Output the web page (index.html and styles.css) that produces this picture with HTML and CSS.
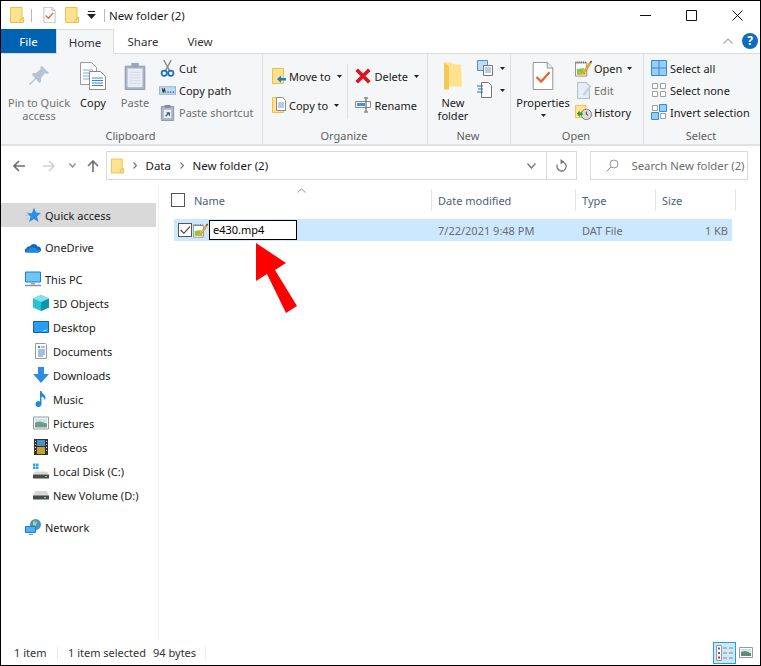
FILE: index.html
```html
<!DOCTYPE html>
<html lang="en">
<head>
<meta charset="utf-8">
<title>New folder (2)</title>
<link rel="stylesheet" href="styles.css">
</head>
<body>
<svg class="defs" width="0" height="0" aria-hidden="true">
  <symbol id="folder" viewBox="0 0 14 16">
    <path d="M.5.5h11.5v15H.5z" fill="#ffe28e" stroke="#eac04f"/>
    <path d="M12 10.5h1.5v5H10v-3h2z" fill="#ffe28e" stroke="#eac04f"/>
  </symbol>
  <symbol id="props" viewBox="0 0 22 30">
    <path d="M.5.5h15l6 6v23H.5z" fill="#fff" stroke="#8a8a8a"/>
    <path d="M15.5.5v6h6" fill="#eee" stroke="#8a8a8a"/>
    <path d="M4 16l5 5 9-10" fill="none" stroke="#e8642c" stroke-width="2.4"/>
  </symbol>
  <symbol id="notepad" viewBox="0 0 18 17">
    <path d="M.5 2.5h12v14H.5z" fill="#fff" stroke="#8a8a8a"/>
    <path d="M1 1v2M3 1v2M5 1v2M7 1v2M9 1v2M11 1v2" stroke="#666"/>
    <path d="M2 9l8-1-3 7H2z" fill="#8cc63f"/>
    <path d="M7 14l3.500-1L12 15H3l2-3z" fill="#e6b422"/>
    <path d="M8 13L15.500 2l1.500 1L10 14z" fill="#f0b429" stroke="#a96a00" stroke-width=".5"/>
    <path d="M15.500 2L17 0l1 1-1 2z" fill="#8b1a1a"/>
  </symbol>
  <symbol id="caret" viewBox="0 0 7 4"><path d="M0 0h7L3.500 4z" fill="#222"/></symbol>
  <symbol id="drive" viewBox="0 0 16 10">
    <path d="M2 1h12l2 5H0z" fill="#d8d8d8"/>
    <path d="M0 5.500h16v4H0z" fill="#4b4b4b"/>
    <path d="M11 7h2v1.200h-2z" fill="#6fdc6f"/>
  </symbol>
</svg>

<div class="window">
  <header class="titlebar">
    <svg class="ic-folder"><use href="#folder"/></svg>
    <span class="qdiv"></span>
    <svg class="ic-qprops"><use href="#props"/></svg>
    <svg class="ic-folder ic-q2"><use href="#folder"/></svg>
    <svg class="ic-qdrop" viewBox="0 0 9 8"><path d="M1 0h7v1H1z" fill="#222"/><path d="M0 3h9L4.500 8z" fill="#222"/></svg>
    <span class="qdiv qdiv2"></span>
    <span class="title">New folder (2)</span>
    <div class="winctrls">
      <svg class="winbtn" viewBox="0 0 11 11"><path d="M0 5.500h11" stroke="#111"/></svg>
      <svg class="winbtn" viewBox="0 0 11 11"><path d="M.5.500h10v10H.5z" fill="none" stroke="#111"/></svg>
      <svg class="winbtn" viewBox="0 0 11 11"><path d="M.5.500l10 10M10.500.500l-10 10" stroke="#111" fill="none"/></svg>
    </div>
  </header>

  <nav class="tabs">
    <span class="tab tab-file">File</span>
    <span class="tab tab-home">Home</span>
    <span class="tab tab-share">Share</span>
    <span class="tab tab-view">View</span>
    <svg class="ribbon-up" viewBox="0 0 10 6"><path d="M.5 5.500L5 1l4.500 4.500" fill="none" stroke="#a8a8a8" stroke-width="1.200"/></svg>
    <span class="help">?</span>
  </nav>

  <section class="ribbon">
    <div class="group g-clip">
      <div class="group-body">
        <div class="big big-pin dim">
          <svg class="big-ic" viewBox="0 0 24 28"><path d="M15 4l7 7-2 1-2-1-4 5 0 4-2 1-3-4-6 6-1-1 6-6-3-3 1-2h3l5-4-1-2z" fill="#b6c3d6"/></svg>
          <span>Pin to Quick<br>access</span>
        </div>
        <div class="big big-copy">
          <svg class="big-ic" viewBox="0 0 26 28">
            <path d="M.5.500h11l5 5v17H.5z" fill="#fff" stroke="#9a9a9a"/>
            <path d="M3 8h10M3 11h10M3 14h10M3 17h10" stroke="#7ba7e0"/>
            <path d="M9.500 9.500h11l5 5v13h-16z" fill="#fff" stroke="#8a8a8a"/>
            <path d="M12 16h11M12 18.500h11M12 21h11M12 23.500h11" stroke="#3f7fdc"/>
          </svg>
          <span>Copy</span>
        </div>
        <div class="big big-paste dim">
          <svg class="big-ic" viewBox="0 0 22 30">
            <path d="M.5 4.500h21v25H.5z" fill="#a8b4c6" stroke="#8b97aa"/>
            <path d="M3 7h16v20H3z" fill="#e9eef6"/>
            <path d="M7 1h8v5H7z" fill="#9aa6b8"/>
            <path d="M5 11h12M5 14h12M5 17h12M5 20h12M5 23h12" stroke="#cfd8e6"/>
          </svg>
          <span>Paste</span>
        </div>
        <div class="col col-clip">
          <div class="small">
            <svg class="sm-ic" viewBox="0 0 16 18"><path d="M4 0l6 11M12 0L6 11" stroke="#8a8a8a" stroke-width="1.500"/><circle cx="4.500" cy="14" r="2.800" fill="none" stroke="#1a6fc0" stroke-width="1.800"/><circle cx="11.500" cy="14" r="2.800" fill="none" stroke="#1a6fc0" stroke-width="1.800"/></svg>
            <span>Cut</span>
          </div>
          <div class="small">
            <svg class="sm-ic" viewBox="0 0 16 16"><path d="M.5 4.500h15v7H.5z" fill="#bcdcf5" stroke="#8fb7d8"/><path d="M3 6l1 4 1-4 1 4M8 9.500h1M10.500 9.500h1M13 9.500h1" stroke="#333" fill="none"/></svg>
            <span>Copy path</span>
          </div>
          <div class="small dim">
            <svg class="sm-ic" viewBox="0 0 16 18"><path d="M1.500 2.500h13v15h-13z" fill="#a8b4c6" stroke="#8b97aa"/><path d="M5 1h6v3H5z" fill="#7e8a9d"/><path d="M4 6h8v9H4z" fill="#e9eef6"/><path d="M6 13l3-3M7 9.500h3v3" stroke="#44597a" fill="none" stroke-width="1.300"/></svg>
            <span>Paste shortcut</span>
          </div>
        </div>
      </div>
      <div class="group-label">Clipboard</div>
    </div>

    <div class="group g-org">
      <div class="group-body">
        <div class="col col-org">
          <div class="small">
            <svg class="sm-ic org-ic" viewBox="0 0 14 16"><path d="M.5.500h11v15H.5z" fill="#ffe28e" stroke="#eac04f"/><path d="M5 11l4-3.500V10h5v2.500H9V15z" fill="#1f7fd0"/></svg>
            <span class="txt-caret">Move to</span>
            <svg class="caret"><use href="#caret"/></svg>
          </div>
          <div class="small">
            <svg class="sm-ic org-ic" viewBox="0 0 14 16"><path d="M.5.500h11v15H.5z" fill="#ffe28e" stroke="#eac04f"/><path d="M4.500.500h6l3 3v10h-9z" fill="#fff" stroke="#8a8a8a"/><path d="M6 6h6M6 8h6M6 10h6" stroke="#6a9ad8"/></svg>
            <span class="txt-caret">Copy to</span>
            <svg class="caret"><use href="#caret"/></svg>
          </div>
        </div>
        <span class="vdiv"></span>
        <div class="col col-org col-del">
          <div class="small">
            <svg class="sm-ic del-ic" viewBox="0 0 14 14"><path d="M1.500 1.500l11 11M12.500 1.500l-11 11" stroke="#e0101c" stroke-width="3.200"/></svg>
            <span class="txt-caret">Delete</span>
            <svg class="caret"><use href="#caret"/></svg>
          </div>
          <div class="small">
            <svg class="sm-ic del-ic" viewBox="0 0 16 16"><path d="M.5 4.500h15v6H.5z" fill="#fff" stroke="#8a8a8a"/><path d="M2 6h8v3H2z" fill="#3a96e0"/><path d="M11 1.500v13M9 1h4M9 15h4" stroke="#555" fill="none"/></svg>
            <span>Rename</span>
          </div>
        </div>
      </div>
      <div class="group-label">Organize</div>
    </div>

    <div class="group g-new">
      <div class="group-body">
        <div class="big big-new">
          <svg class="big-ic" viewBox="0 0 18 27"><path d="M0 0h7l3 2 7 0 1 22H5L0 27z" fill="#ffe28e"/><path d="M0 0l5 4v23L0 27z" fill="#f2c955"/></svg>
          <span>New<br>folder</span>
        </div>
        <div class="col col-newitems">
          <div class="small">
            <svg class="new-ic" viewBox="0 0 20 16"><path d="M.5.500h10v10H.5z" fill="#bcdcf5" stroke="#5a8fb8"/><path d="M6.500 5.500h9v10h-9z" fill="#fff" stroke="#777"/><path d="M8 8h6M8 10h6M8 12h6" stroke="#6a9ad8"/></svg>
            <svg class="caret"><use href="#caret"/></svg>
          </div>
          <div class="small">
            <svg class="new-ic" viewBox="0 0 20 16"><path d="M4.500.500h7l3 3v12h-10z" fill="#fff" stroke="#777"/><path d="M0 4h6M1 7h5M0 10h6" stroke="#1a6fc0" stroke-width="1.200"/></svg>
            <svg class="caret"><use href="#caret"/></svg>
          </div>
        </div>
      </div>
      <div class="group-label">New</div>
    </div>

    <div class="group g-open">
      <div class="group-body">
        <div class="big big-props">
          <svg class="big-ic"><use href="#props"/></svg>
          <span>Properties</span>
          <svg class="caret caret-big"><use href="#caret"/></svg>
        </div>
        <div class="col col-open">
          <div class="small">
            <svg class="sm-ic"><use href="#notepad"/></svg>
            <span class="txt-caret">Open</span>
            <svg class="caret"><use href="#caret"/></svg>
          </div>
          <div class="small dim">
            <svg class="sm-ic" viewBox="0 0 16 16"><path d="M2.500.500h8l3 3v12h-11z" fill="#e6edf7" stroke="#b0bdd0"/><path d="M7 12L14 3l1.500 1L9 13z" fill="#c4d0e2"/></svg>
            <span>Edit</span>
          </div>
          <div class="small">
            <svg class="sm-ic" viewBox="0 0 18 16"><path d="M.5.500h11v13H.5z" fill="#ffe28e" stroke="#eac04f"/><circle cx="12" cy="10" r="5.500" fill="#ddd" stroke="#777"/><path d="M12 7v3l2 1" stroke="#333" fill="none"/><path d="M2 9l3-3v2h3v3H5v2z" fill="#2f9e2f"/></svg>
            <span>History</span>
          </div>
        </div>
      </div>
      <div class="group-label">Open</div>
    </div>

    <div class="group g-select">
      <div class="group-body">
        <div class="col col-select">
          <div class="small">
            <svg class="sm-ic" viewBox="0 0 16 16"><path d="M.5.500h15v15H.5z" fill="#9ccbf5" stroke="#2b8fe0"/><path d="M8 0v16M0 8h16" stroke="#2b8fe0"/></svg>
            <span>Select all</span>
          </div>
          <div class="small">
            <svg class="sm-ic" viewBox="0 0 16 16"><path d="M1.500 1.500h5v5h-5zM9.500 1.500h5v5h-5zM1.500 9.500h5v5h-5zM9.500 9.500h5v5h-5z" fill="#fff" stroke="#a0a0a0"/></svg>
            <span>Select none</span>
          </div>
          <div class="small">
            <svg class="sm-ic" viewBox="0 0 16 16"><path d="M1.500 1.500h5v5h-5zM9.500 9.500h5v5h-5z" fill="#fff" stroke="#a0a0a0"/><path d="M8.500.500h7v7h-7zM.5 8.500h7v7h-7z" fill="#9ccbf5" stroke="#2b8fe0"/></svg>
            <span>Invert selection</span>
          </div>
        </div>
      </div>
      <div class="group-label">Select</div>
    </div>
  </section>

  <div class="navrow">
    <svg class="nav-ic" viewBox="0 0 12 12"><path d="M12 6H1.500M6 1L1 6l5 5" fill="none" stroke="#6d6d6d" stroke-width="1.600"/></svg>
    <svg class="nav-ic nav-fwd" viewBox="0 0 12 12"><path d="M0 6h10.500M6 1l5 5-5 5" fill="none" stroke="#d0d0d0" stroke-width="1.600"/></svg>
    <svg class="nav-chev" viewBox="0 0 7 5"><path d="M.5.500L3.500 4l3-3.500" fill="none" stroke="#8a8a8a" stroke-width="1.300"/></svg>
    <svg class="nav-ic nav-up" viewBox="0 0 12 12"><path d="M6 12V1.500M1 6l5-5 5 5" fill="none" stroke="#6d6d6d" stroke-width="1.600"/></svg>
    <div class="addr">
      <svg class="ic-folder addr-folder"><use href="#folder"/></svg>
      <svg class="crumb" viewBox="0 0 4 7"><path d="M.5.500l3 3-3 3" fill="none" stroke="#777" stroke-width="1.200"/></svg>
      <span class="crumb-t">Data</span>
      <svg class="crumb" viewBox="0 0 4 7"><path d="M.5.500l3 3-3 3" fill="none" stroke="#777" stroke-width="1.200"/></svg>
      <span class="crumb-t">New folder (2)</span>
      <svg class="addr-chev" viewBox="0 0 9 6"><path d="M.5.500L4.500 5l4-4.500" fill="none" stroke="#777" stroke-width="1.400"/></svg>
      <span class="addr-refresh">
        <svg class="refresh" viewBox="0 0 12 14"><path d="M6 3a5 5 0 1 1-4.500 3" fill="none" stroke="#777" stroke-width="1.400"/><path d="M5 0v5.500L9 3z" fill="#777"/></svg>
      </span>
    </div>
    <div class="search">
      <svg class="search-ic" viewBox="0 0 13 13"><circle cx="8" cy="5" r="4" fill="none" stroke="#999"/><path d="M5 8l-4.500 4.500" stroke="#999"/></svg>
      <span>Search New folder (2)</span>
    </div>
  </div>

  <div class="main">
    <aside class="side">
      <div class="nav-item top active"><svg class="tree-ic" viewBox="0 0 16 15"><path d="M9 0l2 5 5 .5-4 3.500 1.500 5.500L9 11.500 4 14.500 5.500 9 2 6l5-.5z" fill="#2a8fe6"/><path d="M0 5h4M0 8h3M0 11h3" stroke="#a6cff0"/></svg><span>Quick access</span></div>
      <div class="nav-item top gap"><svg class="tree-ic" viewBox="0 0 16 11"><path d="M2 11a2 2 0 0 1-.5-4C2 5 4 4.500 5 5c1-3 6-3.500 7.500 0a3 3 0 0 1 1 6z" fill="#0f66c0"/><path d="M2 11a2 2 0 0 1 1-3c2-3 7-3 9 0l3 .5a2 2 0 0 1-1.500 2.500z" fill="#1e8ae0"/></svg><span>OneDrive</span></div>
      <div class="nav-item top gap"><svg class="tree-ic" viewBox="0 0 16 15"><path d="M.5.500h15v10H.5z" fill="#6ec6f5" stroke="#1c7fc9"/><path d="M6 11h4v2H6z" fill="#a0a8b0"/><path d="M0 14h16" stroke="#8a949e" stroke-width="1.500"/></svg><span>This PC</span></div>
      <div class="nav-item"><svg class="tree-ic" viewBox="0 0 16 16"><path d="M8 0l8 3.500v9L8 16l-8-3.500v-9z" fill="#27c2d6"/><path d="M8 7l8-3.500v9L8 16z" fill="#0f95a8"/><path d="M8 0l8 3.500L8 7 0 3.500z" fill="#7fe3ee"/></svg><span>3D Objects</span></div>
      <div class="nav-item"><svg class="tree-ic" viewBox="0 0 16 12"><path d="M.5.500h15v11H.5z" fill="#2a9df4" stroke="#0f63a8"/><path d="M10 10l4-1" stroke="#bde4ff"/></svg><span>Desktop</span></div>
      <div class="nav-item"><svg class="tree-ic" viewBox="0 0 16 16"><path d="M2.500.500h10l1 1v14h-11z" fill="#fff" stroke="#999"/><path d="M5 3h2v2H5z" fill="#2a8fe6"/><path d="M8 4h4M5 7h7M5 9h7M5 11h7M5 13h5" stroke="#4a80b8"/></svg><span>Documents</span></div>
      <div class="nav-item"><svg class="tree-ic" viewBox="0 0 16 16"><path d="M5 0h6v7h5l-8 9-8-9h5z" fill="#2f8be0"/></svg><span>Downloads</span></div>
      <div class="nav-item"><svg class="tree-ic" viewBox="0 0 16 16"><path d="M7 0h1.500c0 3 4 3.500 4 7 0 1-.5 2-1 2.500.5-2-1-3.500-3-4V13a3 3 0 1 1-1.500-2.500z" fill="#1e8ae0"/></svg><span>Music</span></div>
      <div class="nav-item"><svg class="tree-ic" viewBox="0 0 16 13"><path d="M.5.500h15v12H.5z" fill="#fff" stroke="#999"/><path d="M2 2h12v4H2z" fill="#c9e3f5"/><path d="M2 6l5-1 7 2v4H2z" fill="#6e9a8a"/></svg><span>Pictures</span></div>
      <div class="nav-item"><svg class="tree-ic" viewBox="0 0 14 16"><path d="M0 0h14v16H0z" fill="#333"/><path d="M3 1h8v6H3z" fill="#4a90d0"/><path d="M3 8h8v7H3z" fill="#c8a030"/><path d="M1 2h1v1H1zM1 5h1v1H1zM1 8h1v1H1zM1 11h1v1H1zM12 2h1v1h-1zM12 5h1v1h-1zM12 8h1v1h-1zM12 11h1v1h-1z" fill="#ddd"/></svg><span>Videos</span></div>
      <div class="nav-item"><svg class="tree-ic" viewBox="0 0 16 15"><path d="M0 0h2.500v2.500H0zM3 0h2.500v2.500H3zM0 3h2.500v2.500H0zM3 3h2.500v2.500H3z" fill="#26a8e8"/><path d="M2 8h12l2 3H0z" fill="#d8d8d8"/><path d="M0 11h16v4H0z" fill="#4b4b4b"/><path d="M12 12.500h2v1h-2z" fill="#6fdc6f"/></svg><span>Local Disk (C:)</span></div>
      <div class="nav-item"><svg class="tree-ic drive-ic"><use href="#drive"/></svg><span>New Volume (D:)</span></div>
      <div class="nav-item top gap"><svg class="tree-ic" viewBox="0 0 16 16"><circle cx="10.500" cy="5.500" r="5.500" fill="#4b94c8"/><path d="M8 2l4 1-1 4-3-1z" fill="#a6d47c"/><path d="M.5 7.500h10v6H.5z" fill="#4ab4f0" stroke="#1c7fc9"/><path d="M4 15.500h4" stroke="#8a949e"/></svg><span>Network</span></div>
    </aside>

    <section class="files">
      <svg class="sort" viewBox="0 0 9 5"><path d="M.5 4.500L4.500 1l4 3.500" fill="none" stroke="#9a9a9a"/></svg>
      <div class="head">
        <div class="h-cell h-name"><span class="cbox"></span><span>Name</span></div>
        <div class="h-cell">Date modified</div>
        <div class="h-cell">Type</div>
        <div class="h-cell">Size</div>
      </div>
      <div class="row">
        <div class="r-name">
          <span class="cbox checked"><svg viewBox="0 0 11 11"><path d="M1.500 5.500l3 3 5.500-6" fill="none" stroke="#333"/></svg></span>
          <svg class="file-ic"><use href="#notepad"/></svg>
          <span class="rename">e430.mp4</span>
        </div>
        <div class="r-cell">7/22/2021 9:48 PM</div>
        <div class="r-cell">DAT File</div>
        <div class="r-cell r-size">1 KB</div>
      </div>
      <svg class="pointer" viewBox="0 0 46 70"><path d="M1 0l30 20-11 7 22 36-11 7-19-39-11 7z" fill="#fe0000"/></svg>
    </section>
  </div>

  <footer class="status">
    <span class="s-count">1 item</span>
    <span class="s-sel">1 item selected</span>
    <span class="s-bytes">94 bytes</span>
    <span class="s-views">
      <span class="view-btn on">
        <svg viewBox="0 0 18 16"><path d="M.5.500h5v15h-5z" fill="#fff" stroke="#999"/><path d="M2 2.500h2v2H2zM2 7h2v2H2z" fill="#666"/><path d="M2 11.500h2v2H2z" fill="#c0392b"/><path d="M7 3h4M13 3h4M7 8h4M13 8h4M7 13h4M13 13h4" stroke="#888" stroke-width="1.200"/></svg>
      </span>
      <span class="view-btn">
        <svg viewBox="0 0 14 11"><path d="M.5.500h13v10H.5z" fill="#fff" stroke="#999"/><path d="M2 2h10v3H2z" fill="#c9e3f5"/><path d="M2 5l4-1 6 2v3H2z" fill="#5e8a78"/></svg>
      </span>
    </span>
  </footer>
</div>
</body>
</html>
```

FILE: styles.css
```css
* { box-sizing: border-box; }
html, body { margin: 0; padding: 0; }
body {
  width: 761px;
  height: 666px;
  overflow: hidden;
  background: #fff;
  font-family: "Noto Sans", "Open Sans", sans-serif;
  font-size: 11px;
  color: #1a1a1a;
}
.defs { display: block; height: 0; width: 0; }
svg { display: block; flex: none; }

.window {
  width: 761px;
  height: 666px;
  display: flex;
  flex-direction: column;
  border: 1px solid #000;
  background: #fff;
}

/* title bar */
.titlebar { height: 28px; display: flex; align-items: center; padding-left: 9px; flex: none; }
.ic-folder { width: 14px; height: 16px; }
.qdiv { width: 1px; height: 13px; background: #b8b8b8; margin-left: 7px; }
.ic-qprops { width: 13px; height: 16px; margin-left: 11px; }
.ic-q2 { margin-left: 9px; }
.ic-qdrop { width: 9px; height: 8px; margin-left: 8px; }
.qdiv2 { margin-left: 8px; }
.title { font-size: 11.500px; margin-left: 4px; }
.winctrls { margin-left: auto; display: flex; gap: 35px; padding-right: 17px; }
.winbtn { width: 11px; height: 11px; }

/* tabs */
.tabs { height: 24px; flex: none; display: flex; align-items: stretch; position: relative; z-index: 1; }
.tab { display: flex; align-items: center; justify-content: center; font-size: 11.500px; color: #333; }
.tab-file { width: 55px; background: #0063b1; color: #fff; }
.tab-home { width: 58px; background: #f5f6f7; border: 1px solid #dadbdc; border-bottom: 0; height: 25px; }
.tab-share { width: 58px; }
.tab-view { width: 56px; }
.ribbon-up { width: 10px; height: 6px; margin: 9px 0 0 auto; }
.help {
  width: 16px; height: 16px; margin: 4px 2px 0 9px; border-radius: 50%;
  background: #0f6cc0; color: #fff; font-weight: 700; font-size: 12px; line-height: 16px; text-align: center;
}

/* ribbon */
.ribbon {
  height: 93px; flex: none; display: flex; background: #f5f6f7;
  border-top: 1px solid #dadbdc; border-bottom: 2px solid #e1e2e3;
}
.group { display: flex; flex-direction: column; border-right: 1px solid #dfe0e1; padding-top: 2px; }
.group-body { flex: 1; display: flex; min-height: 0; }
.group-label { height: 19px; text-align: center; color: #5f5f5f; line-height: 22px; padding-right: 2px; }
.g-clip { width: 262px; }
.g-org { width: 165px; }
.g-new { width: 83px; }
.g-open { width: 133px; }
.g-select { flex: 1; border-right: 0; }
.dim { color: #6f6f6f; }

.big { display: flex; flex-direction: column; align-items: center; text-align: center; line-height: 13px; }
.big-ic { height: 28px; margin-top: 6px; margin-bottom: 6px; }
.big-pin { width: 76px; }
.big-pin .big-ic { width: 24px; }
.big-copy { width: 32px; }
.big-copy .big-ic { width: 26px; }
.big-paste { width: 46px; margin-left: 3px; }
.big-paste .big-ic { width: 22px; }
.big-new { width: 48px; margin-left: 1px; }
.big-new .big-ic { width: 18px; }
.big-props { width: 62px; margin-left: 1px; }
.big-props .big-ic { width: 22px; }
.caret { width: 5px; height: 3px; }
.caret-big { margin-top: 5px; }

.col { display: flex; flex-direction: column; }
.small { display: flex; align-items: center; height: 22px; gap: 3px; white-space: nowrap; }
.sm-ic { width: 17px; height: 17px; }
.txt-caret { margin-right: 3px; }

.col-clip { margin-left: 1px; padding-top: 1px; }
.col-org { padding: 9px 0 0 9px; gap: 7px; width: 85px; }
.col-del { padding-left: 7px; width: 79px; }
.org-ic { width: 14px; height: 16px; }
.del-ic { width: 16px; height: 16px; }
.vdiv { width: 1px; height: 55px; margin-top: 8px; background: #dfe0e1; }
.col-newitems { padding-top: 1px; }
.new-ic { width: 20px; height: 16px; }
.col-open { margin-left: 1px; padding-top: 1px; }
.col-open .small { gap: 2px; }
.col-select { padding: 1px 0 0 7px; }
.col-select .sm-ic { width: 16px; height: 16px; }

/* navigation row */
.navrow { height: 39px; flex: none; display: flex; align-items: center; padding: 0 12px 0 12px; }
.nav-ic { width: 12px; height: 12px; }
.nav-fwd { margin-left: 18px; }
.nav-chev { width: 7px; height: 5px; margin-left: 14px; }
.nav-up { margin-left: 11px; }
.addr {
  margin-left: 7px; width: 473px; height: 29px; border: 1px solid #d9d9d9;
  display: flex; align-items: center; padding-left: 4px;
}
.addr-folder { width: 13px; height: 16px; }
.crumb { width: 4px; height: 7px; margin-left: 9px; }
.crumb-t { margin-left: 8.500px; font-size: 11.500px; }
.addr-chev { width: 9px; height: 6px; margin-left: auto; margin-right: 10px; }
.addr-refresh {
  width: 30px; height: 27px; border-left: 1px solid #d9d9d9;
  display: flex; align-items: center; justify-content: center;
}
.refresh { width: 11px; height: 13px; }
.search {
  margin-left: 13px; width: 158px; height: 29px; border: 1px solid #d9d9d9;
  display: flex; align-items: center; color: #6d6d6d; padding-left: 15px; font-size: 11.300px; white-space: nowrap;
}
.search-ic { width: 13px; height: 13px; margin-right: 12px; }

/* main */
.main { flex: 1; display: flex; min-height: 0; }
.side { width: 158px; flex: none; border-right: 1px solid #f0f0f0; padding-top: 18px; }
.nav-item { height: 24px; display: flex; align-items: center; padding-left: 32px; white-space: nowrap; margin-right: 2px; }
.nav-item.top { padding-left: 24px; }
.nav-item.gap { margin-top: 8px; }
.nav-item.active { background: #d9d9d9; }
.tree-ic { width: 16px; height: 16px; margin-right: 4px; }
.drive-ic { height: 10px; }

.files { flex: 1; position: relative; min-width: 0; }
.sort { position: absolute; left: 138px; top: 3px; width: 9px; height: 5px; }
.head {
  display: grid; grid-template-columns: 273px 144px 80px 80px; height: 34px; padding-top: 4px;
}
.h-cell { height: 22px; border-right: 1px solid #e5e5e5; padding-left: 6px; color: #4c607a; display: flex; align-items: center; }
.h-name { padding-left: 12px; gap: 9px; }
.cbox { width: 14px; height: 14px; border: 1px solid #555; background: #fff; display: block; flex: none; }
.checked svg { width: 12px; height: 12px; }
.row {
  display: grid; grid-template-columns: 264px 144px 80px 70px; height: 22px;
  margin-left: 15px; width: 558px; background: #cce8ff; align-items: center; color: #6d6d6d;
}
.r-name { display: flex; align-items: center; padding-left: 4px; color: #000; }
.file-ic { width: 15px; height: 17px; margin-left: 1px; }
.rename {
  width: 88px; height: 20px; border: 1px solid #000; background: #fff; margin-left: 1px;
  padding-left: 3px; font-size: 11px; line-height: 18px;
}
.r-size { text-align: right; padding-right: 4px; }
.pointer { position: absolute; left: 96px; top: 58px; width: 46px; height: 70px; }

/* status */
.status { height: 25px; flex: none; display: flex; align-items: center; color: #333; padding-left: 13px; }
.s-count { width: 44px; border-right: 1px solid #ececec; height: 14px; line-height: 14px; }
.s-sel { margin-left: 10px; }
.s-bytes { margin-left: 7px; width: 53px; border-right: 1px solid #ececec; height: 14px; line-height: 14px; }
.s-views { margin-left: auto; display: flex; align-items: center; padding-right: 7px; gap: 3px; }
.view-btn { width: 14px; height: 22px; display: flex; align-items: center; justify-content: center; }
.view-btn.on { width: 23px; background: #cce8ff; border: 1px solid #26a0da; }
.view-btn.on svg { width: 18px; height: 16px; }
.view-btn svg { width: 14px; height: 11px; }
```
